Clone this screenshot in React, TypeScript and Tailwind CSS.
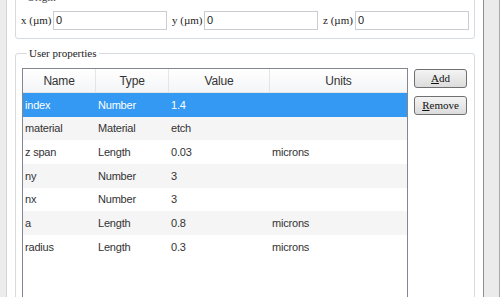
const rows = [
  ["index", "Number", "1.4", ""],
  ["material", "Material", "etch", ""],
  ["z span", "Length", "0.03", "microns"],
  ["ny", "Number", "3", ""],
  ["nx", "Number", "3", ""],
  ["a", "Length", "0.8", "microns"],
  ["radius", "Length", "0.3", "microns"],
];

const serif = "font-['Liberation_Serif',serif]";
const sans = "font-['Liberation_Sans',sans-serif] tracking-[-0.2px]";

function Field({ label }: { label: string }) {
  return (
    <div className="flex flex-1 items-center">
      <span className={`w-[32px] shrink-0 text-[11px] text-[#222] ${serif}`}>{label}</span>
      <div className={`flex h-[19px] flex-1 items-center border border-[#c9ccd1] bg-white pl-[2px] text-[11px] text-[#222] ${sans}`}>
        0
      </div>
    </div>
  );
}

function Btn({ first, rest }: { first: string; rest: string }) {
  return (
    <button className={`flex h-[19px] w-[53px] items-center justify-center rounded-[3px] border border-[#707070] bg-linear-to-b from-[#f4f4f4] to-[#dcdcdc] text-[11px] text-[#111] ${serif}`}>
      <span className="underline">{first}</span>
      {rest}
    </button>
  );
}

export default function App() {
  return (
    <div className="flex h-[297px] w-[500px] overflow-hidden bg-white">
      <div className="w-[7px] shrink-0 border-r border-[#d4d4d4] bg-[#ececec]" />
      <div className="flex flex-1 flex-col px-[8px]">
        <fieldset className="-mt-[9px] rounded-[3px] border border-[#d5dbe0] px-[5px] pb-[8px] pt-[8px]">
          <legend className={`ml-[4px] px-[2px] text-[11px] leading-[12px] text-[#444] ${serif}`}>Origin</legend>
          <div className="flex gap-[5px]">
            <Field label="x (µm)" />
            <Field label="y (µm)" />
            <Field label="z (µm)" />
          </div>
        </fieldset>
        <fieldset className="mt-[8px] h-[300px] shrink-0 rounded-[3px] border border-[#d5dbe0] pl-[6px] pr-[6px] pt-[9px]">
          <legend className={`ml-[5px] px-[2px] text-[11px] leading-[12px] text-[#222] ${serif}`}>User properties</legend>
          <div className="flex items-start gap-[6px]">
            <div className={`h-[260px] w-[386px] border border-[#828790] bg-white text-[11px] text-[#333] ${sans}`}>
              <div className="grid h-[24px] grid-cols-[73px_73px_101px_137px] border-b border-[#e5e5e5] bg-linear-to-b from-white to-[#f4f5f7] text-[12px]">
                {["Name", "Type", "Value", "Units"].map((h, i) => (
                  <div key={h} className={`flex items-center justify-center ${i < 3 ? "border-r border-[#e5e5e5]" : ""}`}>
                    {h}
                  </div>
                ))}
              </div>
              {rows.map((r, i) => (
                <div
                  key={r[0]}
                  className={`grid h-[23.67px] grid-cols-[73px_73px_101px_137px] items-center ${
                    i === 0 ? "bg-[#3399f3] text-white" : i % 2 === 1 ? "bg-[#f5f5f5]" : "bg-white"
                  }`}
                >
                  {r.map((c, j) => (
                    <div key={j} className="pl-[2px]">
                      {c}
                    </div>
                  ))}
                </div>
              ))}
            </div>
            <div className="mt-[1px] flex flex-col gap-[8px]">
              <Btn first="A" rest="dd" />
              <Btn first="R" rest="emove" />
            </div>
          </div>
        </fieldset>
      </div>
      <div className="w-[17px] shrink-0 border-l border-r border-l-[#8f8f8f] border-r-[#a8a8a8] bg-[#ebebeb]" />
    </div>
  );
}
